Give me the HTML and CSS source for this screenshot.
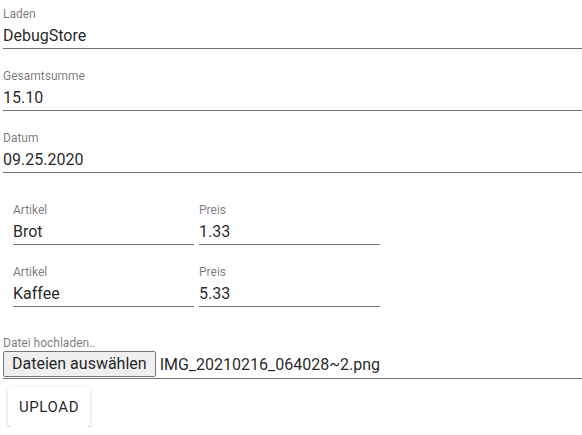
FILE: index.html
```html
<!DOCTYPE html>
<html lang="de">
<head>
<meta charset="utf-8">
<link rel="stylesheet" href="styles.css">
</head>
<body>
<form class="form">
  <div class="field">
    <label class="label">Laden</label>
    <div class="value">DebugStore</div>
  </div>
  <div class="field">
    <label class="label">Gesamtsumme</label>
    <div class="value">15.10</div>
  </div>
  <div class="field">
    <label class="label">Datum</label>
    <div class="value">09.25.2020</div>
  </div>
  <div class="items">
    <div class="item-row">
      <div class="field small">
        <label class="label">Artikel</label>
        <div class="value">Brot</div>
      </div>
      <div class="field small">
        <label class="label">Preis</label>
        <div class="value">1.33</div>
      </div>
    </div>
    <div class="item-row">
      <div class="field small">
        <label class="label">Artikel</label>
        <div class="value">Kaffee</div>
      </div>
      <div class="field small">
        <label class="label">Preis</label>
        <div class="value">5.33</div>
      </div>
    </div>
  </div>
  <div class="file-field">
    <label class="label">Datei hochladen..</label>
    <div class="file-row">
      <button type="button" class="file-btn">Dateien auswählen</button>
      <span class="file-name">IMG_20210216_064028~2.png</span>
    </div>
  </div>
  <button type="button" class="upload">UPLOAD</button>
</form>
</body>
</html>
```

FILE: styles.css
```css
html, body {
  margin: 0;
  padding: 0;
  background: #fff;
}
body {
  font-family: Roboto, "Liberation Sans", sans-serif;
  color: rgba(0, 0, 0, 0.87);
}
.form {
  padding-left: 3px;
}
.field {
  height: 62px;
  box-sizing: border-box;
  padding-top: 7px;
}
.label {
  display: block;
  font-size: 12px;
  line-height: 14px;
  color: rgba(0, 0, 0, 0.54);
}
.value {
  font-size: 16px;
  line-height: 19px;
  padding: 5px 0 3px;
  border-bottom: 1px solid rgba(0, 0, 0, 0.55);
}
.items {
  padding: 10px 0 0 10px;
}
.item-row {
  display: flex;
  gap: 5px;
}
.field.small {
  width: 181px;
}
.file-field {
  padding-top: 16px;
}
.file-row {
  display: flex;
  align-items: center;
  gap: 4px;
  padding: 1px 0 1px;
  border-bottom: 1px solid rgba(0, 0, 0, 0.55);
}
.file-btn {
  font-family: Roboto, "Liberation Sans", sans-serif;
  font-size: 16px;
  color: rgba(0, 0, 0, 0.87);
  background: #efefef;
  border: 1px solid #767676;
  border-radius: 2px;
  padding: 2px 8px;
  margin: 0;
  height: 26px;
  line-height: 20px;
}
.file-name {
  font-size: 16px;
}
.upload {
  display: block;
  margin: 8px 0 0 5px;
  width: 82px;
  height: 40px;
  background: #fff;
  border: none;
  border-radius: 4px;
  font-family: Roboto, "Liberation Sans", sans-serif;
  font-size: 15px;
  color: rgba(0, 0, 0, 0.87);
  letter-spacing: 0.6px;
  box-shadow: 0 3px 1px -2px rgba(0,0,0,0.2), 0 2px 2px 0 rgba(0,0,0,0.14), 0 1px 5px 0 rgba(0,0,0,0.12);
}
```
